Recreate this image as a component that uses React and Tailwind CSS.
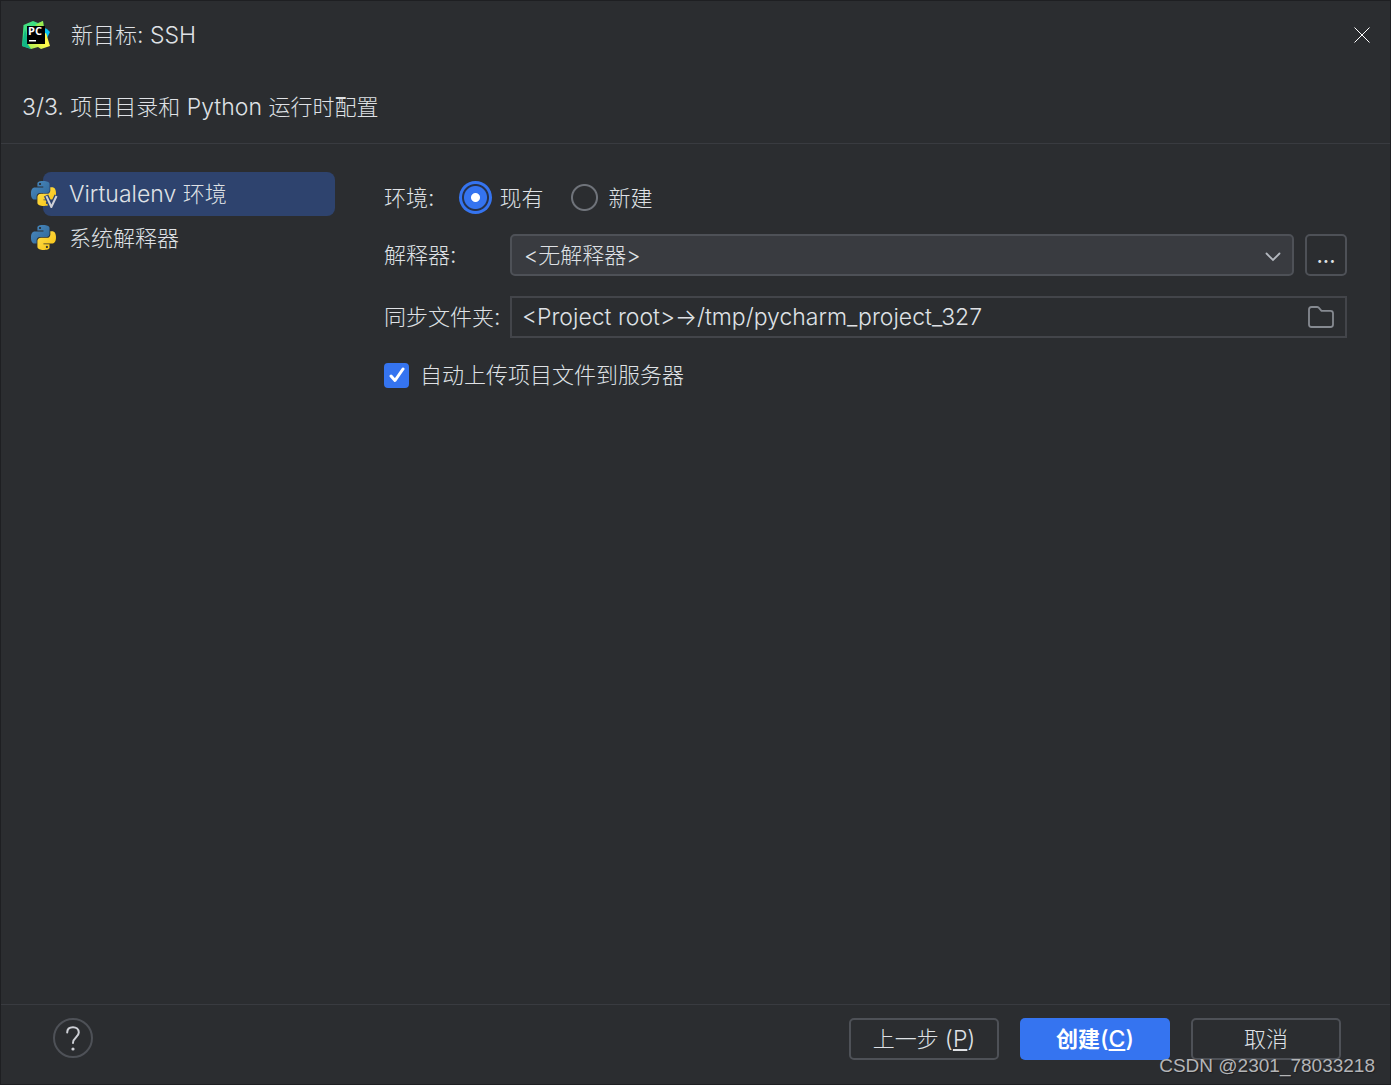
import React, { useState } from 'react';

function PyCharmLogo() {
  return (
    <svg viewBox="0 0 28 28" className="size-7 shrink-0" aria-hidden="true">
      <defs>
        <linearGradient id="pcGreen" x1="0" y1="0" x2="0.6" y2="1">
          <stop offset="0" stopColor="#4be07e" />
          <stop offset="1" stopColor="#21d789" />
        </linearGradient>
        <linearGradient id="pcYellow" x1="1" y1="0" x2="0" y2="1">
          <stop offset="0.5" stopColor="#fcf84a" />
          <stop offset="1" stopColor="#8fea5c" />
        </linearGradient>
      </defs>
      <path d="M1.5 4 L11 0 L16 2 L21 0 L22 10 L8 24 L9 28 L0 25 Z" fill="url(#pcGreen)" />
      <path d="M13 4 L21 0 L22 8 Z" fill="#9bea4e" />
      <path d="M0 25 L3 8 L6 20 L9 28 Z" fill="#12b886" />
      <path d="M20 6 L25 8 L28 11 L24 19 L20 16 Z" fill="#07c3f2" />
      <path d="M24 12 L28 25 L19 28 L16 26 L9 28 L5 22 Z" fill="url(#pcYellow)" />
      <rect x="5" y="5" width="18" height="18" fill="#000" />
      <text x="6" y="14" fill="#fff" fontSize="11" fontWeight="700" fontFamily="Open Sans, sans-serif">PC</text>
      <rect x="7" y="19" width="7" height="1.5" fill="#fff" />
    </svg>
  );
}

function PythonIcon({ virtual }) {
  return (
    <svg viewBox="0 0 26 26" className="-ml-3 size-[27px] shrink-0" aria-hidden="true">
      <defs>
        <linearGradient id="pyBlue" x1="0" y1="0" x2="1" y2="1">
          <stop offset="0" stopColor="#4a8cc2" />
          <stop offset="1" stopColor="#2f6494" />
        </linearGradient>
        <linearGradient id="pyYellow" x1="0" y1="0" x2="1" y2="1">
          <stop offset="0" stopColor="#ffe052" />
          <stop offset="1" stopColor="#f7c10d" />
        </linearGradient>
      </defs>
      <path fill="url(#pyBlue)" d="M14.25.18l.9.2.73.26.59.3.45.32.34.34.25.34.16.33.1.3.04.26.02.2-.01.13V8.5l-.05.63-.13.55-.21.46-.26.38-.3.31-.33.25-.35.19-.35.14-.33.1-.3.07-.26.04-.21.02H8.77l-.69.05-.59.14-.5.22-.41.27-.33.32-.27.35-.2.36-.15.37-.1.35-.07.32-.04.27-.02.21v3.06H3.17l-.21-.03-.28-.07-.32-.12-.35-.18-.36-.26-.36-.36-.35-.46-.32-.59-.28-.73-.21-.88-.14-1.05-.05-1.23.06-1.22.16-1.04.24-.87.32-.71.36-.57.4-.44.42-.33.42-.24.4-.16.36-.1.32-.05.24-.01h.16l.06.01h8.16v-.83H6.18l-.01-2.75-.02-.37.05-.34.11-.31.17-.28.25-.26.31-.23.38-.2.44-.18.51-.15.58-.12.64-.1.71-.06.77-.04.84-.02 1.27.05zm-6.3 1.98l-.23.33-.08.41.08.41.23.34.33.22.41.09.41-.09.33-.22.23-.34.08-.41-.08-.41-.23-.33-.33-.22-.41-.09-.41.09z" />
      <path fill="url(#pyYellow)" d="M21.04 6.11l.28.06.32.12.35.18.36.27.36.35.35.47.32.59.28.73.21.88.14 1.04.05 1.23-.06 1.23-.16 1.04-.24.86-.32.71-.36.57-.4.45-.42.33-.42.24-.4.16-.36.09-.32.05-.24.02-.16-.01h-8.22v.82h5.84l.01 2.76.02.36-.05.34-.11.31-.17.29-.25.25-.31.24-.38.2-.44.17-.51.15-.58.13-.64.09-.71.07-.77.04-.84.01-1.27-.04-1.07-.14-.9-.2-.73-.25-.59-.3-.45-.33-.34-.34-.25-.34-.16-.33-.1-.3-.04-.25-.02-.2.01-.13v-5.34l.05-.64.13-.54.21-.46.26-.38.3-.32.33-.24.35-.2.35-.14.33-.1.3-.06.26-.04.21-.02.13-.01h5.84l.69-.05.59-.14.5-.21.41-.28.33-.32.27-.35.2-.36.15-.36.1-.35.07-.32.04-.28.02-.21V6.07h2.09l.14.01zm-6.47 14.25l-.23.33-.08.41.08.41.23.33.33.23.41.08.41-.08.33-.23.23-.33.08-.41-.08-.41-.23-.33-.33-.23-.41-.08-.41.08z" />
      {virtual && (
        <>
          <path d="M14.5 14 L19.6 25 L24.8 14" fill="none" stroke="#2e436e" strokeWidth="4.5" />
          <path d="M14.8 14.5 L19.6 25 L24.6 14.5" fill="none" stroke="#ced0d6" strokeWidth="2" />
        </>
      )}
    </svg>
  );
}

const targets = [
  { id: 'venv', latin: 'Virtualenv ', label: '环境' },
  { id: 'system', latin: '', label: '系统解释器' }
];

const environments = [
  { id: 'existing', label: '现有' },
  { id: 'new', label: '新建' }
];

// Latin runs are set a size above the Chinese text
function Latin({ children }) {
  return <span className="text-[23px]">{children}</span>;
}

const footerButton = 'h-[42px] w-[150px] rounded-[5px] border-2 border-[#4e5157] text-center';

export default function App() {
  const [target, setTarget] = useState('venv');
  const [environment, setEnvironment] = useState('existing');
  const [folder, setFolder] = useState('<Project root>→/tmp/pycharm_project_327');
  const [autoUpload, setAutoUpload] = useState(true);

  return (
    <div className="relative flex min-h-screen flex-col border border-[#1e1f22] bg-[#2b2d30] font-['Inter','Noto_Sans_CJK_SC',sans-serif] text-[22px] leading-8 font-light text-[#dfe1e5]">
      <header className="border-b border-[#393b40] pb-5">
        <div className="flex items-center gap-[21px] pt-[18px] pr-5 pl-[21px]">
          <PyCharmLogo />
          <h1 className="flex-1">新目标<Latin>: SSH</Latin></h1>
          <button type="button" aria-label="关闭" className="text-white">
            <svg viewBox="0 0 16 16" className="size-4" fill="none" stroke="currentColor">
              <path d="M0.5 0.5 L15.5 15.5 M15.5 0.5 L0.5 15.5" />
            </svg>
          </button>
        </div>
        <h2 className="mt-10 px-[21px]"><Latin>3/3. </Latin>项目目录和<Latin> Python </Latin>运行时配置</h2>
      </header>

      <main className="flex flex-1">
        <nav className="w-[334px] shrink-0 pt-7 pl-[42px]">
          {targets.map(item => (
            <button
              key={item.id}
              type="button"
              onClick={() => setTarget(item.id)}
              className={`flex h-11 w-full items-center gap-[11px] rounded-lg text-left ${target === item.id ? 'bg-[#2e436e]' : ''}`}
            >
              <PythonIcon virtual={item.id === 'venv'} />
              <span><Latin>{item.latin}</Latin>{item.label}</span>
            </button>
          ))}
        </nav>

        <form className="flex-1 pt-[37px] pr-[43px] pl-[49px]">
          <fieldset className="flex items-center gap-6">
            <legend className="float-left">环境<Latin>:</Latin></legend>
            {environments.map(item => (
              <label key={item.id} className="flex items-center gap-2">
                <input
                  type="radio"
                  name="environment"
                  checked={environment === item.id}
                  onChange={() => setEnvironment(item.id)}
                  className="size-[33px] appearance-none rounded-full bg-[radial-gradient(circle,transparent_11px,#6f737a_12px,#6f737a_13px,transparent_14px)] checked:bg-[radial-gradient(circle,#fff_4px,#3574f0_5px,#3574f0_11px,#25324d_12px,#25324d_13px,#3574f0_14px)]"
                />
                {item.label}
              </label>
            ))}
          </fieldset>

          <div className="mt-5 flex items-center">
            <label htmlFor="interpreter" className="w-[126px] shrink-0">解释器<Latin>:</Latin></label>
            <div className="relative flex-1">
              <select id="interpreter" className="h-[42px] w-full appearance-none rounded-[5px] border-2 border-[#4e5157] bg-[#393b40] px-3">
                <option>&lt;无解释器&gt;</option>
              </select>
              <svg viewBox="0 0 16 10" className="pointer-events-none absolute top-[18px] right-[13px] h-[10px] w-4" fill="none" stroke="#b4b8bf" strokeWidth="1.8" strokeLinecap="round">
                <path d="M1.5 1.5 L8 8 L14.5 1.5" />
              </svg>
            </div>
            <button type="button" className="ml-[11px] size-[42px] rounded-[5px] border-2 border-[#4e5157] font-normal">...</button>
          </div>

          <div className="mt-5 flex items-center">
            <label htmlFor="folder" className="w-[126px] shrink-0">同步文件夹<Latin>:</Latin></label>
            <div className="flex h-[42px] flex-1 items-center border-2 border-[#43454a] pr-[11px] pl-[10px]">
              <input
                id="folder"
                type="text"
                value={folder}
                onChange={e => setFolder(e.target.value)}
                className="min-w-0 flex-1 bg-transparent text-[23px] outline-none"
              />
              <button type="button" aria-label="浏览">
                <svg viewBox="0 0 26 22" className="h-[22px] w-[26px]" fill="none" stroke="#868a91" strokeWidth="1.8" strokeLinejoin="round">
                  <path d="M1 3.5 Q1 1 3.5 1 H9 Q10 1 10.7 1.7 L13.5 4.8 H22.5 Q25 4.8 25 7.3 V18.5 Q25 21 22.5 21 H3.5 Q1 21 1 18.5 Z" />
                </svg>
              </button>
            </div>
          </div>

          <label className="mt-[21px] flex items-center gap-[11px]">
            <span className="grid size-[25px] place-items-center">
              <input
                type="checkbox"
                checked={autoUpload}
                onChange={e => setAutoUpload(e.target.checked)}
                className="peer col-start-1 row-start-1 size-[25px] appearance-none rounded-sm border-2 border-[#6f737a] checked:border-[#3574f0] checked:bg-[#3574f0]"
              />
              <svg viewBox="0 0 16 16" className="pointer-events-none invisible col-start-1 row-start-1 size-4 peer-checked:visible" fill="none" stroke="#fff" strokeWidth="3" strokeLinecap="round" strokeLinejoin="round">
                <path d="M2 9 L6 13.5 L14 2" />
              </svg>
            </span>
            自动上传项目文件到服务器
          </label>
        </form>
      </main>

      <footer className="flex items-start gap-[21px] border-t border-[#393b40] pt-[13px] pr-[49px] pb-6 pl-[52px]">
        <button type="button" aria-label="帮助" className="mr-auto grid size-10 place-items-center rounded-full border-2 border-[#4e5157]">
          <svg viewBox="0 0 14 25" className="h-[25px] w-[14px]" fill="none" stroke="#ced0d6" strokeWidth="2" strokeLinecap="round">
            <path d="M1.2 6.5 C1.2 3 3.8 1.2 7 1.2 C10.2 1.2 12.8 3.2 12.8 6.6 C12.8 11.2 7 11.5 7 17" />
            <circle cx="7" cy="23" r="1.6" fill="#ced0d6" stroke="none" />
          </svg>
        </button>
        <button type="button" className={footerButton}>上一步 <Latin>(<u className="underline-offset-2">P</u>)</Latin></button>
        <button type="button" className="h-[42px] w-[150px] rounded-[5px] bg-[#3574f0] text-center font-semibold text-white">创建<span className="text-[23px] font-medium">(<u className="underline-offset-2">C</u>)</span></button>
        <button type="button" className={footerButton}>取消</button>
      </footer>

      <p className="pointer-events-none absolute right-[15px] bottom-1 font-['Liberation_Sans',sans-serif] text-[19px] leading-7 font-normal text-[#b4b5b7] [text-shadow:1px_1px_1px_#1e1f22]">CSDN @2301_78033218</p>
    </div>
  );
}
